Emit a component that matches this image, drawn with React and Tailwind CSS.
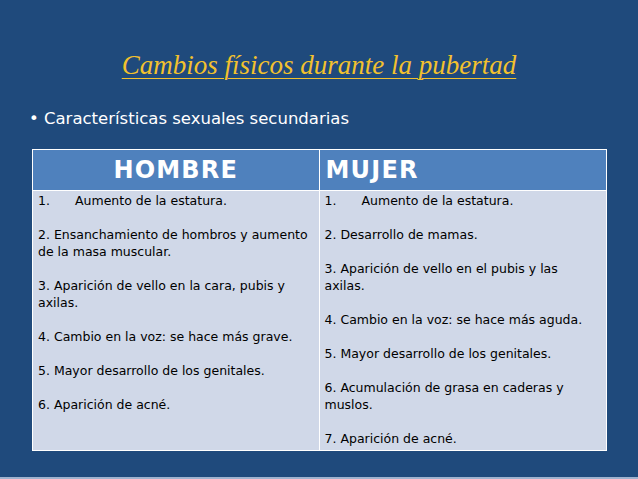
const hombre = [
  { n: '1.', t: 'Aumento de la estatura.', tab: true },
  { t: '2. Ensanchamiento de hombros y aumento de la masa muscular.' },
  { t: '3. Aparición de vello en la cara, pubis y axilas.' },
  { t: '4. Cambio en la voz: se hace más grave.' },
  { t: '5. Mayor desarrollo de los genitales.' },
  { t: '6. Aparición de acné.' },
]

const mujer = [
  { n: '1.', t: 'Aumento de la estatura.', tab: true },
  { t: '2. Desarrollo de mamas.' },
  { t: '3. Aparición de vello en el pubis y las axilas.' },
  { t: '4. Cambio en la voz: se hace más aguda.' },
  { t: '5. Mayor desarrollo de los genitales.' },
  { t: '6. Acumulación de grasa en caderas y muslos.' },
  { t: '7. Aparición de acné.' },
]

function Items({ list }) {
  return (
    <div className="flex flex-col gap-[17px] px-[5px] pt-[1px] pb-[3px] text-[12.5px] leading-[17px] text-black">
      {list.map((it, i) =>
        it.tab ? (
          <p key={i} className="flex">
            <span className="w-[37px] shrink-0">{it.n}</span>
            <span>{it.t}</span>
          </p>
        ) : (
          <p key={i}>{it.t}</p>
        )
      )}
    </div>
  )
}

export default function App() {
  return (
    <div className="h-[479px] w-[638px] overflow-hidden bg-[#1f4a7c] flex flex-col font-['DejaVu_Sans',sans-serif]">
      <h1 className="mt-[47px] text-center font-['Liberation_Serif',serif] italic text-[27px] leading-[36px] text-[#f2c12e] underline underline-offset-[4px] decoration-[1px]">
        Cambios físicos durante la pubertad
      </h1>
      <p className="mt-[26px] pl-[29px] text-[16.5px] leading-[20px] text-white">
        • Características sexuales secundarias
      </p>
      <div className="mt-[20px] ml-[32px] w-[575px] grid grid-cols-2 border-[1.5px] border-white bg-[#d0d8e8]">
        <div className="h-[41px] bg-[#4f81bd] border-b-[1.5px] border-r-[1.5px] border-white flex items-center justify-center">
          <span className="text-[24px] font-bold text-white tracking-wider">HOMBRE</span>
        </div>
        <div className="h-[41px] bg-[#4f81bd] border-b-[1.5px] border-white flex items-center px-[6px]">
          <span className="text-[24px] font-bold text-white tracking-wider">MUJER</span>
        </div>
        <div className="border-r-[1.5px] border-white">
          <Items list={hombre} />
        </div>
        <div>
          <Items list={mujer} />
        </div>
      </div>
      <div className="mt-auto h-[2px] bg-[#9fb3cf]" />
    </div>
  )
}
